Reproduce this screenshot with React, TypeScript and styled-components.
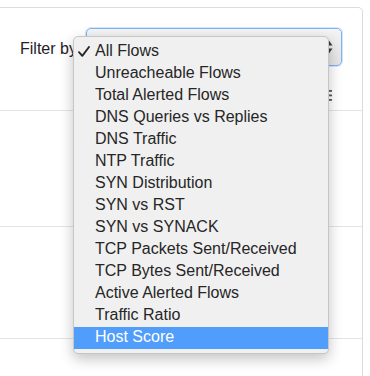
import React from 'react';
import styled, { createGlobalStyle } from 'styled-components';

const OPTIONS = [
  'All Flows',
  'Unreacheable Flows',
  'Total Alerted Flows',
  'DNS Queries vs Replies',
  'DNS Traffic',
  'NTP Traffic',
  'SYN Distribution',
  'SYN vs RST',
  'SYN vs SYNACK',
  'TCP Packets Sent/Received',
  'TCP Bytes Sent/Received',
  'Active Alerted Flows',
  'Traffic Ratio',
  'Host Score',
];

const SELECTED = 0;
const HOVERED = 13;

const GlobalStyle = createGlobalStyle`
  html, body {
    margin: 0;
    padding: 0;
    background: #ffffff;
    font-family: "Liberation Sans", Arial, sans-serif;
    overflow: hidden;
  }
`;

export default function App() {
  return (
    <>
      <GlobalStyle />
      <Page>
        <Card>
          <Header>
            <Label>Filter by</Label>
            <Select>
              <svg width="8" height="14" viewBox="0 0 8 14">
                <path d="M4 0.5 L7.5 5.5 H0.5 Z" fill="#3a3a3a" />
                <path d="M4 13.5 L7.5 8.5 H0.5 Z" fill="#3a3a3a" />
              </svg>
            </Select>
          </Header>
          <Toolbar>
            <svg width="14" height="11" viewBox="0 0 14 11">
              <rect x="0" y="0" width="14" height="1.8" fill="#5a5a5a" />
              <rect x="0" y="4.5" width="14" height="1.8" fill="#5a5a5a" />
              <rect x="0" y="9" width="14" height="1.8" fill="#5a5a5a" />
            </svg>
          </Toolbar>
          <Row $height={115} />
          <Row $height={111} />
          <Row $height={60} />
        </Card>

        <Menu>
          {OPTIONS.map((label, i) => (
            <Item key={label} $active={i === HOVERED}>
              <Check>
                {i === SELECTED && (
                  <svg width="12" height="11" viewBox="0 0 12 11">
                    <path
                      d="M1 6.2 L4.3 9.8 L11 1"
                      fill="none"
                      stroke="#262626"
                      strokeWidth="1.9"
                      strokeLinecap="round"
                      strokeLinejoin="round"
                    />
                  </svg>
                )}
              </Check>
              {label}
            </Item>
          ))}
        </Menu>
      </Page>
    </>
  );
}

const Page = styled.div`
  position: relative;
  width: 370px;
  height: 376px;
  padding: 7px 7px 0 0;
  box-sizing: border-box;
`;

const Card = styled.div`
  border: 1px solid #dcdcdc;
  border-left: none;
  border-radius: 0 5px 0 0;
  background: #ffffff;
`;

const Header = styled.div`
  display: flex;
  align-items: center;
  padding: 20px 20px 0 20px;
  height: 38px;
`;

const Label = styled.span`
  font-size: 16px;
  color: #1f2226;
  width: 66px;
  padding-top: 3px;
  white-space: nowrap;
`;

const Select = styled.div`
  display: flex;
  align-items: center;
  justify-content: flex-end;
  padding-right: 8px;
  width: 256px;
  height: 38px;
  box-sizing: border-box;
  border: 1px solid #80b3f3;
  border-radius: 5px;
  background: linear-gradient(#f4f4f4, #e4e4e4);
  box-shadow: 0 0 0 1px rgba(128, 179, 243, 0.35);
`;

const Toolbar = styled.div`
  display: flex;
  justify-content: flex-end;
  align-items: flex-end;
  height: 44px;
  box-sizing: border-box;
  padding: 0 30px 9px 0;
`;

const Row = styled.div<{ $height: number }>`
  height: ${(p) => p.$height}px;
  border-top: 1px solid #e4e4e4;
`;

const Menu = styled.div`
  position: absolute;
  left: 73px;
  top: 36px;
  width: 256px;
  box-sizing: border-box;
  padding: 4px 0;
  background: #f0f0f0;
  border: 1px solid #c6c6c6;
  border-radius: 5px;
  box-shadow: 0 5px 14px rgba(0, 0, 0, 0.24);
`;

const Item = styled.div<{ $active: boolean }>`
  display: flex;
  align-items: center;
  height: 22px;
  line-height: 20px;
  padding: 0 0 2px 4px;
  box-sizing: border-box;
  font-size: 16px;
  color: ${(p) => (p.$active ? '#ffffff' : '#262626')};
  background: ${(p) => (p.$active ? '#519dfb' : 'transparent')};
  white-space: nowrap;
`;

const Check = styled.span`
  display: flex;
  align-items: center;
  width: 17px;
  height: 20px;
`;
